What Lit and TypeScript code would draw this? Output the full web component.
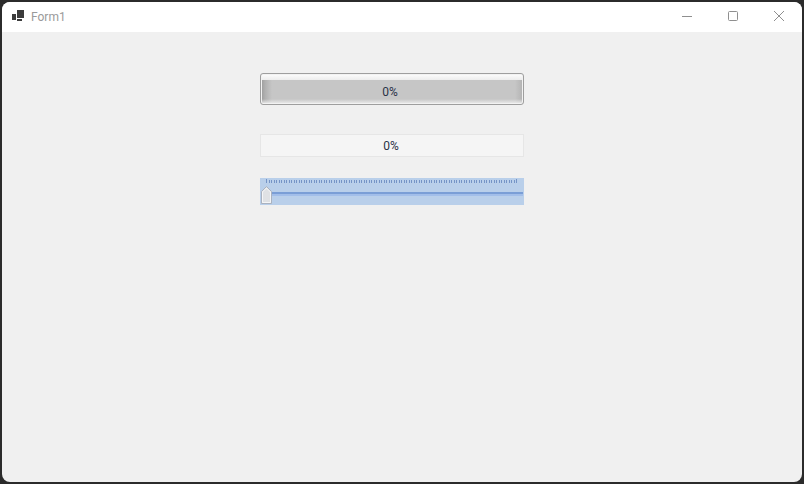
import { LitElement, html, css, svg } from "lit";
import { customElement } from "lit/decorators.js";

@customElement("app-root")
export class AppRoot extends LitElement {
  static styles = css`
    :host {
      display: block;
      width: 804px;
      height: 484px;
      background: #2b2b2b;
      overflow: hidden;
      font-family: Roboto, "Open Sans", "Noto Sans", sans-serif;
    }
    .window {
      box-sizing: border-box;
      width: 800px;
      height: 480px;
      margin: 2px;
      border-radius: 8px;
      background: #f0f0f0;
      overflow: hidden;
      display: flex;
      flex-direction: column;
    }
    .titlebar {
      height: 30px;
      flex: none;
      background: #fff;
      display: flex;
      align-items: center;
      padding-left: 10px;
    }
    .app-icon {
      width: 12px;
      height: 11px;
      flex: none;
      display: block;
      margin-bottom: 3px;
    }
    .title {
      margin-left: 7px;
      font-size: 12px;
      color: #9a9a9a;
      line-height: 30px;
      flex: 1;
    }
    .controls {
      display: flex;
      height: 30px;
    }
    .ctl {
      width: 46px;
      display: flex;
      align-items: center;
      justify-content: center;
      padding-bottom: 2px;
      box-sizing: border-box;
    }
    .ctl svg {
      width: 12px;
      height: 12px;
      display: block;
    }
    .client {
      flex: 1;
      display: flex;
      flex-direction: column;
      padding: 41px 0 0 258px;
    }
    .bar {
      box-sizing: border-box;
      width: 264px;
      display: flex;
      align-items: center;
      justify-content: center;
      font-size: 12px;
      color: #2a3346;
    }
    .glossy {
      height: 32px;
      border: 1px solid #9e9e9e;
      border-radius: 3px;
      padding: 5px 0 0 0;
      background:
        linear-gradient(0deg, #efefef 0, rgba(198,198,198,0) 5px),
        linear-gradient(90deg, #9a9a9a 0, #b0b0b0 4px, rgba(198,198,198,0) 11px),
        linear-gradient(270deg, #b0b0b0 0, #bababa 3px, rgba(198,198,198,0) 8px),
        #c6c6c6;
      background-clip: content-box, content-box, content-box, content-box;
      box-shadow: inset 0 0 0 1px #f2f2f2;
      position: relative;
    }
    .gloss {
      position: absolute;
      inset: 1px 1px auto 1px;
      height: 5px;
      background: linear-gradient(#fafafa, #ececec);
    }
    .gloss-label {
      position: relative;
      margin-right: 4px;
    }
    .flat {
      height: 23px;
      margin-top: 29px;
      border: 1px solid #e6e6e6;
      background: #f5f5f5;
      padding-right: 2px;
    }
    .slider {
      box-sizing: border-box;
      position: relative;
      width: 264px;
      height: 27px;
      margin-top: 21px;
      background: #b9cfea;
      padding-top: 1px;
    }
    .ticks {
      display: flex;
      justify-content: space-between;
      align-items: flex-end;
      height: 4px;
      margin: 0 6px;
    }
    .tick {
      width: 1px;
      height: 3px;
      background: #7594c6;
    }
    .tick.end {
      height: 4px;
    }
    .channel {
      box-sizing: border-box;
      height: 4px;
      margin: 9px 1px 0 11px;
      border-top: 2px solid #7a9ed6;
      background: #a2bee9;
    }
    .thumb {
      position: absolute;
      left: 1px;
      top: 8px;
      width: 11px;
      height: 18px;
      display: block;
    }
  `;

  render() {
    const ticks = Array.from({ length: 101 }, (_, i) => i);
    return html`
      <div class="window">
        <div class="titlebar">
          <svg class="app-icon" viewBox="0 0 12 11">
            <rect x="5" y="0" width="7" height="8" fill="#3c3c3c" />
            <rect x="0" y="4" width="4" height="6" fill="#3c3c3c" />
            <rect x="5" y="9" width="5" height="2" fill="#3c3c3c" />
          </svg>
          <div class="title">Form1</div>
          <div class="controls">
            <div class="ctl">
              <svg viewBox="0 0 12 12">
                <path d="M1 6.5H11" stroke="#8f8f8f" stroke-width="1" fill="none" />
              </svg>
            </div>
            <div class="ctl">
              <svg viewBox="0 0 12 12">
                <rect x="1.5" y="1.5" width="9" height="9" rx="1" stroke="#8f8f8f" stroke-width="1" fill="none" />
              </svg>
            </div>
            <div class="ctl">
              <svg viewBox="0 0 12 12">
                <path d="M1 1L11 11M11 1L1 11" stroke="#8f8f8f" stroke-width="1" fill="none" />
              </svg>
            </div>
          </div>
        </div>
        <div class="client">
          <div class="bar glossy"><div class="gloss"></div><span class="gloss-label">0%</span></div>
          <div class="bar flat">0%</div>
          <div class="slider">
            <div class="ticks">
              ${ticks.map((i) => html`<div class="tick ${i === 0 || i === 100 ? "end" : ""}"></div>`)}
            </div>
            <div class="channel"></div>
            <svg class="thumb" viewBox="0 0 11 18">
              ${svg`<path d="M0.5 5.5L5.5 0.5L10.5 5.5V17.5H0.5Z" fill="#dfe1e4" stroke="#aab2bf" stroke-width="1" />
              <path d="M1.5 6V16.5H9.5V6L5.5 2Z" fill="none" stroke="#f4f5f7" stroke-width="1" />`}
            </svg>
          </div>
        </div>
      </div>
    `;
  }
}
